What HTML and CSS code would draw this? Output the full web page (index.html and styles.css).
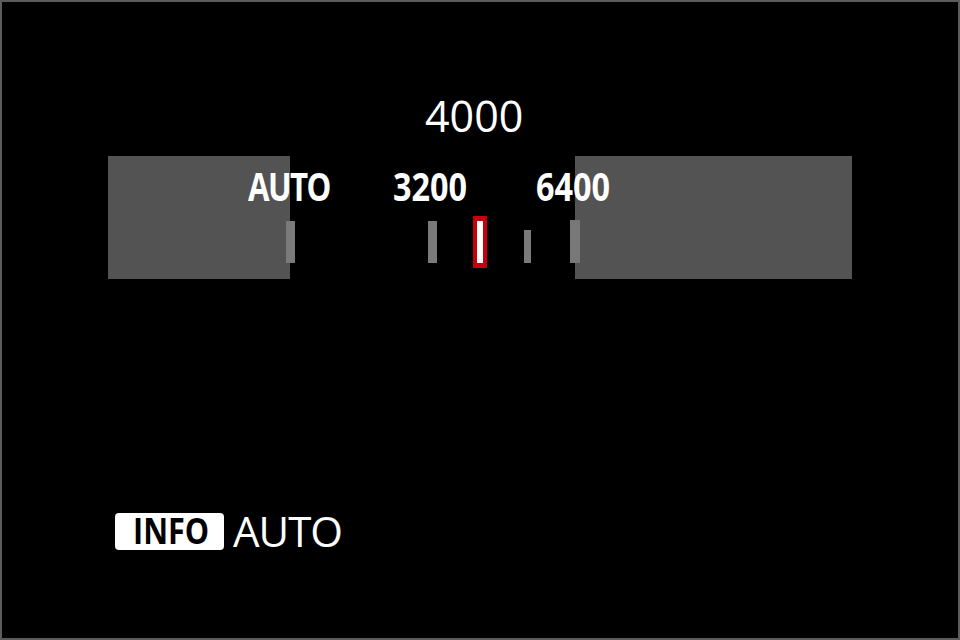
FILE: index.html
```html
<!DOCTYPE html>
<html lang="en">
<head>
    <meta charset="UTF-8">
    <meta name="viewport" content="width=device-width, initial-scale=1.0">
    <title>ISO Speed</title>
    <link rel="stylesheet" href="styles.css">
</head>
<body>
    <div class="screen">
        <div class="readout">4000</div>

        <div class="dial">
            <div class="dial-range dial-range-low"></div>
            <div class="dial-range dial-range-high"></div>

            <span class="dial-label dial-label-auto" style="left: 140px;">AUTO</span>
            <span class="dial-label" style="left: 285px;">3200</span>
            <span class="dial-label" style="left: 428px;">6400</span>

            <div class="tick" style="left: 178px;"></div>
            <div class="tick" style="left: 320px;"></div>
            <div class="tick tick-current" style="left: 365px;"></div>
            <div class="tick tick-minor" style="left: 416px;"></div>
            <div class="tick tick-edge" style="left: 462px;"></div>
        </div>

        <div class="footer">
            <div class="info-badge"><span>INFO</span></div>
            <span class="footer-mode">AUTO</span>
        </div>
    </div>
</body>
</html>
```

FILE: styles.css
```css
* {
    margin: 0;
    padding: 0;
    box-sizing: border-box;
}

body {
    background: #000;
    color: #fff;
    font-family: 'Open Sans', 'Noto Sans', sans-serif;
}

.screen {
    width: 960px;
    height: 640px;
    border: 2px solid #5c5c5c;
    padding-top: 92px;
    overflow: hidden;
}

.readout {
    padding-left: 423px;
    font-size: 43px;
    line-height: 1;
    height: 43px;
}

.dial {
    position: relative;
    margin: 19px 0 0 106px;
    width: 744px;
    height: 123px;
}

.dial-range {
    position: absolute;
    top: 0;
    height: 123px;
    background: #535353;
}

.dial-range-low {
    left: 0;
    width: 182px;
}

.dial-range-high {
    left: 467px;
    width: 277px;
}

.dial-label {
    position: absolute;
    top: 10px;
    font-size: 40px;
    font-weight: 700;
    line-height: 1;
    transform: scaleX(0.81);
    transform-origin: left top;
}

.dial-label-auto {
    letter-spacing: -2px;
    transform: scaleX(0.78);
}

.tick {
    position: absolute;
    top: 65px;
    width: 9px;
    height: 42px;
    background: #7a7a7a;
}

.tick-current {
    top: 60px;
    width: 14px;
    height: 52px;
    background: #fff;
    border: 5px solid #c8000e;
    border-width: 5px 4px;
}

.tick-minor {
    top: 74px;
    width: 7px;
    height: 33px;
}

.tick-edge {
    top: 64px;
    width: 10px;
    height: 43px;
    background: #787878;
}

.footer {
    display: flex;
    align-items: center;
    gap: 9px;
    margin-top: 231px;
    padding-left: 113px;
}

.info-badge {
    width: 109px;
    height: 37px;
    background: #fff;
    border-radius: 4px;
    color: #000;
    display: flex;
    align-items: center;
    padding-left: 18px;
}

.info-badge span {
    font-size: 36px;
    font-weight: 700;
    line-height: 1;
    transform: scaleX(0.85);
    transform-origin: left center;
}

.footer-mode {
    font-size: 42px;
    line-height: 1;
    letter-spacing: -1px;
}
```
